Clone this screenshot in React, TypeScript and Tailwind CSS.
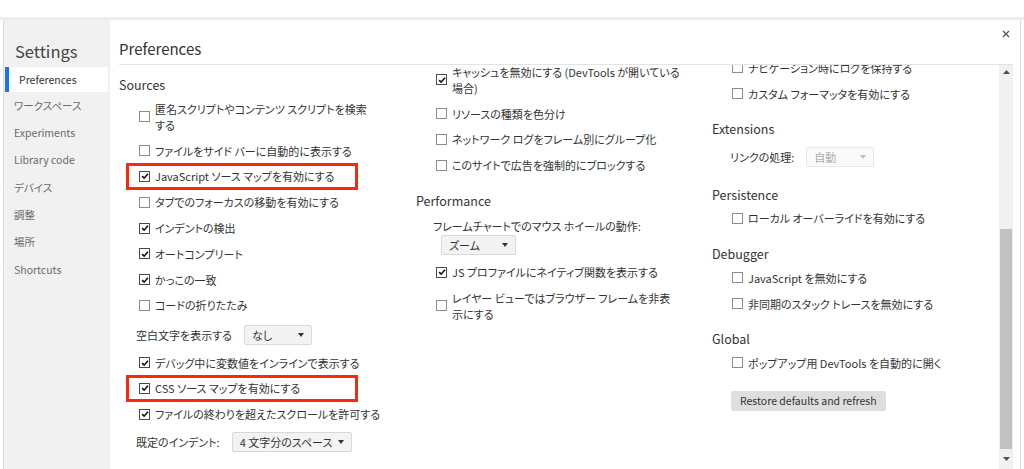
import React from "react";

type Item = { label: React.ReactNode; checked?: boolean; mark?: boolean };

function Box({ checked }: { checked?: boolean }) {
  return (
    <span
      className={`flex h-[11px] w-[11px] shrink-0 items-center justify-center border bg-white ${
        checked ? "border-[#4a4a4a]" : "border-[#8c8c8c]"
      }`}
    >
      {checked && (
        <svg viewBox="0 0 10 10" className="h-[8px] w-[8px]">
          <path d="M1.4 5.2 L3.9 7.7 L8.7 2.1" fill="none" stroke="#111" strokeWidth="2" />
        </svg>
      )}
    </span>
  );
}

function Check({ label, checked, mark }: Item) {
  return (
    <div className="relative flex items-center gap-[5px] py-[4.9px] pl-5">
      {mark && (
        <span className="pointer-events-none absolute top-[-0.5px] bottom-[-0.5px] left-[7px] w-[232px] border-[3px] border-[#f8290c]" />
      )}
      <Box checked={checked} />
      <span className="whitespace-nowrap leading-4">{label}</span>
    </div>
  );
}

function Caret({ color = "#333" }: { color?: string }) {
  return (
    <svg width="6" height="4" viewBox="0 0 6 4" className="shrink-0">
      <path d="M0 0h6L3 4z" fill={color} />
    </svg>
  );
}

function Select({ value, width, disabled }: { value: string; width: string; disabled?: boolean }) {
  return (
    <div
      className={`flex h-5 shrink-0 items-center justify-between gap-[6px] rounded-[2px] border pr-[7px] pl-[7px] ${width} ${
        disabled
          ? "border-[#e6e6e6] bg-[#fafafa] text-[#ababab]"
          : "border-[#d9d9d9] bg-[#f3f3f3] text-[#333]"
      }`}
    >
      <span className="whitespace-nowrap leading-4">{value}</span>
      <Caret color={disabled ? "#bdbdbd" : "#333"} />
    </div>
  );
}

function Section({ title, first }: { title: string; first?: boolean }) {
  return (
    <div className={`mb-px text-[12.5px] leading-5 text-[#333] ${first ? "" : "mt-[12.5px]"}`}>{title}</div>
  );
}

const sideItems = ["ワークスペース", "Experiments", "Library code", "デバイス", "調整", "場所", "Shortcuts"];

export default function App() {
  return (
    <div className="h-[469px] w-[1024px] overflow-hidden bg-white text-[11px] text-[#333] [font-family:'Noto_Sans_CJK_JP','Noto_Sans',sans-serif] [font-feature-settings:'palt']">
      <div className="h-[17px]" />
      <div className="flex h-[452px] flex-col border-t-[3px] border-[#eeeeee]">
        <div className="relative ml-[3px] flex w-[1018px] flex-1 border-x border-[#dcdcdc]">
          {/* Sidebar */}
          <div className="w-[106px] shrink-0 bg-[#f1f1f1]">
            <div className="pt-[20px] pl-[11px] text-[16.5px] leading-[22px] text-[#444]">Settings</div>
            <div className="mt-[5px] mr-[2px] ml-px flex h-[25px] items-center bg-white">
              <span className="h-full w-1 bg-[#1a73e8]" />
              <span className="pl-[10px] text-[10.5px] text-[#333]">Preferences</span>
            </div>
            {sideItems.map((s) => (
              <div key={s} className="flex h-[27.3px] items-center pl-[10px] text-[10.5px] text-[#6b6b6b]">
                {s}
              </div>
            ))}
          </div>

          {/* Main */}
          <div className="flex min-w-0 flex-1 flex-col pr-[7px] pl-[9px]">
            <div className="flex h-[45px] shrink-0 items-start justify-between border-b border-[#e4e4e4]">
              <div className="pt-[19px] text-[15px] leading-5 text-[#333]">Preferences</div>
              <svg width="8" height="8" viewBox="0 0 8 8" className="mt-[10px] mr-[3px]">
                <path d="M1 1L7 7M7 1L1 7" stroke="#555" strokeWidth="1.3" />
              </svg>
            </div>

            <div className="flex min-h-0 flex-1">
              <div className="flex min-w-0 flex-1 overflow-hidden">
                {/* Column 1 */}
                <div className="w-[297px] shrink-0 pt-[10px]">
                  <Section title="Sources" first />
                  <Check
                    label={
                      <>
                        匿名スクリプトやコンテンツ スクリプトを検索
                        <br />
                        する
                      </>
                    }
                  />
                  <Check label="ファイルをサイド バーに自動的に表示する" />
                  <Check label="JavaScript ソース マップを有効にする" checked mark />
                  <Check label="タブでのフォーカスの移動を有効にする" />
                  <Check label="インデントの検出" checked />
                  <Check label="オートコンプリート" checked />
                  <Check label="かっこの一致" checked />
                  <Check label="コードの折りたたみ" />
                  <div className="flex items-center pt-[7px] pb-[4.5px] pl-[17px]">
                    <span className="leading-4">空白文字を表示する</span>
                    <div className="ml-3">
                      <Select value="なし" width="w-[68px]" />
                    </div>
                  </div>
                  <Check label="デバッグ中に変数値をインラインで表示する" checked />
                  <Check label="CSS ソース マップを有効にする" checked mark />
                  <Check label="ファイルの終わりを超えたスクロールを許可する" checked />
                  <div className="flex items-center pt-[5px] pl-[17px]">
                    <span className="leading-4">既定のインデント:</span>
                    <div className="ml-3">
                      <Select value="4 文字分のスペース" width="w-[120px]" />
                    </div>
                  </div>
                </div>

                {/* Column 2 */}
                <div className="mt-[-6px] w-[296px] shrink-0">
                  <Check
                    checked
                    label={
                      <>
                        キャッシュを無効にする (DevTools が開いている
                        <br />
                        場合)
                      </>
                    }
                  />
                  <Check label="リソースの種類を色分け" />
                  <Check label="ネットワーク ログをフレーム別にグループ化" />
                  <Check label="このサイトで広告を強制的にブロックする" />
                  <Section title="Performance" />
                  <div className="pt-[6px] pb-[4.5px] pl-[17px]">
                    <div className="leading-4">フレームチャートでのマウス ホイールの動作:</div>
                    <div className="mt-px ml-2">
                      <Select value="ズーム" width="w-[75px]" />
                    </div>
                  </div>
                  <Check label="JS プロファイルにネイティブ関数を表示する" checked />
                  <Check
                    label={
                      <>
                        レイヤー ビューではブラウザー フレームを非表
                        <br />
                        示にする
                      </>
                    }
                  />
                </div>

                {/* Column 3 */}
                <div className="mt-[-10px] min-w-0 flex-1">
                  <Check label="ナビゲーション時にログを保持する" />
                  <Check label="カスタム フォーマッタを有効にする" />
                  <Section title="Extensions" />
                  <div className="flex items-center pt-[7px] pb-[5px] pl-[18px]">
                    <span className="leading-4">リンクの処理:</span>
                    <div className="ml-3">
                      <Select value="自動" width="w-[68px]" disabled />
                    </div>
                  </div>
                  <Section title="Persistence" />
                  <Check label="ローカル オーバーライドを有効にする" />
                  <Section title="Debugger" />
                  <Check label="JavaScript を無効にする" />
                  <Check label="非同期のスタック トレースを無効にする" />
                  <Section title="Global" />
                  <Check label="ポップアップ用 DevTools を自動的に開く" />
                  <button className="mt-[15px] ml-[19px] flex h-5 items-center rounded-[2px] bg-[#dedede] px-[9px] text-[10.5px] text-[#333]">
                    Restore defaults and refresh
                  </button>
                </div>
              </div>

              {/* Scrollbar */}
              <div className="flex w-[14px] shrink-0 flex-col bg-[#f1f1f1]">
                <div className="flex h-[14px] items-center justify-center">
                  <svg width="7" height="4" viewBox="0 0 7 4">
                    <path d="M0 4h7L3.5 0z" fill="#505050" />
                  </svg>
                </div>
                <div className="flex-1 px-px">
                  <div className="mt-[150px] h-[220px] bg-[#c1c1c1]" />
                </div>
                <div className="mb-[3px] flex h-[14px] items-center justify-center">
                  <svg width="7" height="4" viewBox="0 0 7 4">
                    <path d="M0 0h7L3.5 4z" fill="#505050" />
                  </svg>
                </div>
              </div>
            </div>
          </div>
        </div>
      </div>
    </div>
  );
}
